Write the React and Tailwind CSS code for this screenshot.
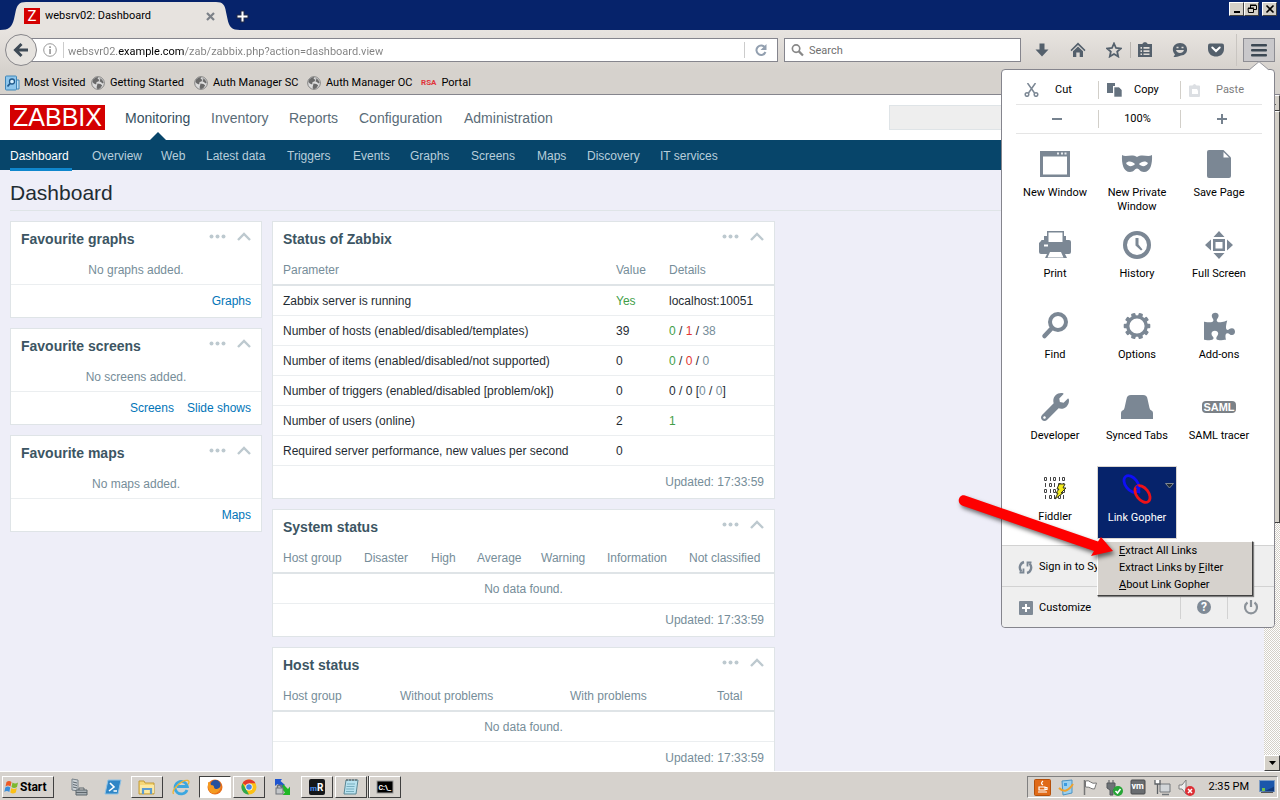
import React from 'react';
import { FaPuzzlePiece, FaWrench } from 'react-icons/fa';

const mainNav = [
    { label: 'Monitoring', width: 'w-[66px]', active: true },
    { label: 'Inventory', width: 'w-[58px]' },
    { label: 'Reports', width: 'w-[50px]' },
    { label: 'Configuration', width: 'w-[85px]' },
    { label: 'Administration', width: 'w-[90px]' },
];

const subNav = [
    { label: 'Dashboard', width: 'w-[62px]', active: true },
    { label: 'Overview', width: 'w-[49px]' },
    { label: 'Web', width: 'w-[25px]' },
    { label: 'Latest data', width: 'w-[61px]' },
    { label: 'Triggers', width: 'w-[46px]' },
    { label: 'Events', width: 'w-[37px]' },
    { label: 'Graphs', width: 'w-[41px]' },
    { label: 'Screens', width: 'w-[46px]' },
    { label: 'Maps', width: 'w-[30px]' },
    { label: 'Discovery', width: 'w-[53px]' },
    { label: 'IT services', width: 'w-[60px]' },
];

const green = 'text-[#429e47]';
const red = 'text-[#e33734]';
const grey = 'text-[#768d99]';

const statusRows = [
    { name: 'Zabbix server is running', value: <span className={green}>Yes</span>, details: 'localhost:10051' },
    {
        name: 'Number of hosts (enabled/disabled/templates)',
        value: '39',
        details: <><span className={green}>0</span> / <span className={red}>1</span> / <span className={grey}>38</span></>,
    },
    {
        name: 'Number of items (enabled/disabled/not supported)',
        value: '0',
        details: <><span className={green}>0</span> / <span className={red}>0</span> / <span className={grey}>0</span></>,
    },
    {
        name: 'Number of triggers (enabled/disabled [problem/ok])',
        value: '0',
        details: <>0 / 0 [<span className={grey}>0</span> / <span className={grey}>0</span>]</>,
    },
    { name: 'Number of users (online)', value: '2', details: <span className={green}>1</span> },
    { name: 'Required server performance, new values per second', value: '0', details: '' },
];

function ZabbixFavicon() {
    return (
        <span className="flex h-4 w-4 items-center justify-center bg-[#d40000] text-[15px] leading-4 text-white">Z</span>
    );
}

function GlobeIcon() {
    return (
        <svg width="14" height="14" viewBox="0 0 15 15">
            <circle cx="7.5" cy="7.5" r="6.8" fill="#dcdcdc" stroke="#7e7e7e" />
            <path d="M2 4 5 1.500 8 1l-1 2 2 1-1 2-2 .5L5.500 9 3 8 1.500 6.500zM9 2l3 2 1.500 3-1 1-2-1.500L9 5.500 10 4zM7 8l3 .5 2 1.500-2 3-3 1.200L6 12z" fill="#6a6a6a" />
        </svg>
    );
}

function TitleBar() {
    const bevel = 'flex h-[14px] items-center justify-center border border-t-white border-l-white border-r-[#404040] border-b-[#404040] bg-[#d4d0c8]';
    return (
        <div className="relative flex h-[30px] shrink-0 items-start bg-[#06236b]">
            <div className="relative mt-[2px] h-7 w-[242px] shrink-0">
                <svg className="absolute inset-0" width="242" height="28" viewBox="0 0 242 28">
                    <path d="M0 28C9 28 12 25 14 17L15.500 10C17 3 19 0 26 0H216C223 0 225 3 226 10L227.500 17C229 25 232 28 240 28Z" fill="#e7e3df" />
                </svg>
                <div className="relative flex h-7 items-center pl-6 pr-[26px]">
                    <ZabbixFavicon />
                    <span className="ml-[5px] flex-1 pt-px text-[11px] text-black">websrv02: Dashboard</span>
                    <button aria-label="Close tab" className="flex h-3 w-3 items-center justify-center">
                        <svg width="9" height="9" viewBox="0 0 9 9"><path d="M1 1l7 7M8 1L1 8" stroke="#7c8188" strokeWidth="2.200" /></svg>
                    </button>
                </div>
            </div>
            <button aria-label="New tab" className="mt-[10px] -ml-[6px]">
                <svg width="13" height="13" viewBox="0 0 13 13">
                    <path d="M4.500 .5h4v4h4v4h-4v4h-4v-4h-4v-4h4z" fill="#222b44" />
                    <path d="M5.500 1.500h2v4h4v2h-4v4h-2v-4h-4v-2h4z" fill="#fff" />
                </svg>
            </button>
            <div className="mt-[2px] mr-[3px] ml-auto flex">
                <button aria-label="Minimize" className={`w-[15px] ${bevel}`}>
                    <svg width="10" height="10" viewBox="0 0 10 10"><path d="M2 7h6v2H2z" /></svg>
                </button>
                <button aria-label="Restore" className={`w-[15px] ${bevel}`}>
                    <svg width="10" height="10" viewBox="0 0 10 10" fill="none" stroke="#000"><path d="M3 1h6M3.500 1v3M3 1.500h6.500v4H7M1 4.500h5.500v4h-5zM1 4h6" /></svg>
                </button>
                <button aria-label="Close" className={`ml-[3px] w-[15px] ${bevel}`}>
                    <svg width="10" height="10" viewBox="0 0 10 10"><path d="M1.500 1.500l7 7M8.500 1.500l-7 7" stroke="#000" strokeWidth="1.600" /></svg>
                </button>
            </div>
        </div>
    );
}

function ToolbarButton({ label, className, children }) {
    return (
        <button aria-label={label} className={`flex h-6 w-5 shrink-0 items-center justify-center ${className}`}>
            <svg width="16" height="16" viewBox="0 0 16 16" fill="#54606c">{children}</svg>
        </button>
    );
}

function Toolbar() {
    return (
        <div className="relative flex h-[40px] shrink-0 items-center bg-linear-to-b from-[#e8e4e0] to-[#d6d2cd] pl-[5px]">
            <button aria-label="Back" className="z-10 flex h-8 w-8 shrink-0 items-center justify-center rounded-full border border-[#87868a] bg-[#e6e3df]">
                <svg width="16" height="16" viewBox="0 0 16 16" fill="none" stroke="#3e4a56" strokeWidth="3"><path d="M15 8H3M8.500 2 2.500 8l6 6" /></svg>
            </button>
            <div className="-ml-4 flex h-6 flex-1 items-center border border-[#85858d] bg-white pl-[21px]">
                <svg width="14" height="14" viewBox="0 0 14 14" className="shrink-0">
                    <circle cx="7" cy="7" r="6.300" fill="none" stroke="#999" />
                    <path d="M6.200 6h1.700v5H6.200zM6.200 3.200h1.700v1.700H6.200z" fill="#999" />
                </svg>
                <span className="ml-[6px] h-4 w-px bg-[#ccc]" />
                <input
                    aria-label="Address"
                    readOnly
                    value="websvr02.example.com/zab/zabbix.php?action=dashboard.view"
                    className="h-5 flex-1 bg-[linear-gradient(to_right,#808080_54px,#000_54px,#000_120px,#808080_120px)] bg-clip-text pt-[2px] pl-1 text-[11px] text-transparent outline-none"
                />
                <button aria-label="Reload" className="flex h-4 w-[33px] items-center justify-center border-l border-[#ccc]">
                    <svg width="14" height="14" viewBox="0 0 14 14"><path d="M11 4.500A4.700 4.700 0 1 0 11.500 9" fill="none" stroke="#93a0b0" strokeWidth="2" /><path d="M12.500 1v6h-6z" fill="#93a0b0" /></svg>
                </button>
            </div>
            <label className="ml-[6px] flex h-6 w-[237px] items-center border border-[#85858d] bg-white pl-[6px]">
                <svg width="14" height="14" viewBox="0 0 14 14" fill="none" stroke="#888"><circle cx="5.500" cy="5.500" r="4" strokeWidth="1.800" /><path d="M8.500 8.500l4.500 4.500" strokeWidth="2.400" /></svg>
                <input aria-label="Search" placeholder="Search" className="ml-[5px] w-full pt-[2px] text-[11px] outline-none placeholder:text-[#707070]" />
            </label>
            <ToolbarButton label="Downloads" className="ml-[11px]"><path d="M5.500 1.500h5v6H14.500L8 14.500 1.500 7.500h4z" /></ToolbarButton>
            <ToolbarButton label="Home" className="ml-4">
                <path d="M8 .5 15.500 8l-1 1.200L8 3 1.500 9.200.5 8zM8 4.500l5 4.700V15H9.700v-4.500H6.300V15H3V9.200z" />
            </ToolbarButton>
            <ToolbarButton label="Bookmark this page" className="ml-4">
                <path d="M8 1.500l2 4.500 4.800.5-3.600 3.200 1 4.800L8 12l-4.200 2.500 1-4.800L1.200 6.500 6 6z" fill="none" stroke="#54606c" strokeWidth="1.800" />
            </ToolbarButton>
            <span className="ml-[6px] h-4 w-px bg-[#b9b5b0]" />
            <ToolbarButton label="Bookmarks" className="ml-1">
                <path d="M5.500 2c0-2.500 5-2.500 5 0H15v13H1V2zM3.500 5v1.700H5V5zm3 0v1.700h6V5zM3.500 8.200v1.700H5V8.200zm3 0v1.700h6V8.200zM3.500 11.400v1.700H5v-1.700zm3 0v1.700h6v-1.700z" fillRule="evenodd" />
            </ToolbarButton>
            <ToolbarButton label="Hello" className="ml-[15px]">
                <path d="M8 1c9 0 9.500 12 1 12.500C6 15 4 15 1.500 15L3 12.500C-1.500 8 1.500 1 8 1z" />
                <path d="M4.500 5.500h2M9.500 5.500h2" stroke="#e0dcd8" strokeWidth="1.500" />
                <path d="M4 8h8c-1 4-7 4-8 0z" fill="#e0dcd8" />
            </ToolbarButton>
            <ToolbarButton label="Pocket" className="ml-4">
                <path d="M2 1.500h12Q16 1.500 16 3.500V7c0 10-16 10-16 0V3.500Q0 1.500 2 1.500z" />
                <path d="M4.300 5.500 8 9l3.700-3.500" fill="none" stroke="#fff" strokeWidth="2" strokeLinecap="round" />
            </ToolbarButton>
            <span className="ml-[10px] h-8 w-px bg-[#c9c5c1]" />
            <button aria-label="Open menu" className="mr-[5px] ml-[6px] flex h-6 w-8 shrink-0 items-center justify-center border border-[#8d8d93] bg-[#c9c8cb]">
                <svg width="16" height="14" viewBox="0 0 16 14" fill="#3c4854"><rect y="1" width="16" height="2.400" rx="1" /><rect y="6" width="16" height="2.400" rx="1" /><rect y="11" width="16" height="2.400" rx="1" /></svg>
            </button>
        </div>
    );
}

function BookmarksBar() {
    return (
        <div className="flex h-[25px] shrink-0 items-center border-b border-[#85858d] bg-[#d6d2cd] pt-[2px] pl-[5px] text-[11px] text-black">
            <a href="#most" className="flex w-[86px] items-center gap-1">
                <svg width="15" height="16" viewBox="0 0 15 16"><rect x=".5" y="1" width="11" height="14" rx="1" fill="#8ec6ec" stroke="#3f86b8" /><path d="M12 5h2v9h-2" fill="#bfe0f5" stroke="#3f86b8" /><circle cx="7" cy="6.500" r="2.500" fill="#d8effc" stroke="#205a8c" strokeWidth="1.300" /><path d="M5 8.500 2.500 11.500" stroke="#205a8c" strokeWidth="1.800" /></svg>
                Most Visited
            </a>
            <a href="#start" className="flex w-[103px] items-center gap-[5px]"><GlobeIcon />Getting Started</a>
            <a href="#sc" className="flex w-[113px] items-center gap-[5px]"><GlobeIcon />Auth Manager SC</a>
            <a href="#oc" className="flex w-[114px] items-center gap-[5px]"><GlobeIcon />Auth Manager OC</a>
            <a href="#portal" className="flex items-center gap-[5px]">
                <span className="text-[8px] font-bold text-[#e0343a]">RSA</span>Portal
            </a>
        </div>
    );
}

function Widget({ title, children, footer }) {
    return (
        <section className="border border-[#dfe4e7] bg-white">
            <div className="flex h-[33px] items-center pt-[2px] pr-[10px] pl-[10px]">
                <h2 className="flex-1 text-[14px] font-bold text-[#3c5563]">{title}</h2>
                <button aria-label="More" className="mb-[6px]">
                    <svg width="17" height="5" viewBox="0 0 17 5" fill="#bdc9cf"><circle cx="2.500" cy="2.500" r="2" /><circle cx="8.500" cy="2.500" r="2" /><circle cx="14.500" cy="2.500" r="2" /></svg>
                </button>
                <button aria-label="Collapse" className="mb-[6px] ml-[11px]">
                    <svg width="14" height="9" viewBox="0 0 14 9"><path d="M1 8l6-6 6 6" fill="none" stroke="#bdc9cf" strokeWidth="2.400" /></svg>
                </button>
            </div>
            {children}
            <div className="flex h-8 items-center justify-end gap-[13px] px-[10px]">{footer}</div>
        </section>
    );
}

function EmptyRow({ children }) {
    return <p className="flex h-[30px] items-center justify-center border-b border-[#ebeef0] text-[#768d99]">{children}</p>;
}

function Updated() {
    return <span className="text-[#768d99]">Updated: 17:33:59</span>;
}

function Dashboard() {
    const link = 'text-[#0275b8]';
    const th = 'h-[31px] border-b-2 border-[#dfe4e7] font-normal';
    return (
        <main className="flex items-start gap-[10px] px-[10px] pt-[10px] text-[12px] text-[#1f2c33]">
            <div className="flex w-[252px] shrink-0 flex-col gap-[10px]">
                <Widget title="Favourite graphs" footer={<a href="#graphs" className={link}>Graphs</a>}>
                    <EmptyRow>No graphs added.</EmptyRow>
                </Widget>
                <Widget
                    title="Favourite screens"
                    footer={<><a href="#screens" className={link}>Screens</a><a href="#slides" className={link}>Slide shows</a></>}
                >
                    <EmptyRow>No screens added.</EmptyRow>
                </Widget>
                <Widget title="Favourite maps" footer={<a href="#maps" className={link}>Maps</a>}>
                    <EmptyRow>No maps added.</EmptyRow>
                </Widget>
            </div>
            <div className="flex w-[503px] shrink-0 flex-col gap-[10px]">
                <Widget title="Status of Zabbix" footer={<Updated />}>
                    <table className="w-full table-fixed border-separate border-spacing-0 text-left">
                        <thead className="text-[#768d99]">
                            <tr>
                                <th className={`pl-[10px] ${th}`}>Parameter</th>
                                <th className={`w-[53px] ${th}`}>Value</th>
                                <th className={`w-[105px] ${th}`}>Details</th>
                            </tr>
                        </thead>
                        <tbody>
                            {statusRows.map((row) => (
                                <tr key={row.name}>
                                    <td className="h-[30px] border-b border-[#ebeef0] pl-[10px]">{row.name}</td>
                                    <td className="border-b border-[#ebeef0]">{row.value}</td>
                                    <td className="border-b border-[#ebeef0]">{row.details}</td>
                                </tr>
                            ))}
                        </tbody>
                    </table>
                </Widget>
                <Widget title="System status" footer={<Updated />}>
                    <table className="w-full table-fixed border-separate border-spacing-0 text-left text-[#768d99]">
                        <thead>
                            <tr>
                                <th className={`w-[91px] pl-[10px] ${th}`}>Host group</th>
                                <th className={`w-[67px] ${th}`}>Disaster</th>
                                <th className={`w-[46px] ${th}`}>High</th>
                                <th className={`w-[64px] ${th}`}>Average</th>
                                <th className={`w-[66px] ${th}`}>Warning</th>
                                <th className={`w-[82px] ${th}`}>Information</th>
                                <th className={th}>Not classified</th>
                            </tr>
                        </thead>
                        <tbody>
                            <tr><td colSpan="7" className="h-[30px] border-b border-[#ebeef0] text-center">No data found.</td></tr>
                        </tbody>
                    </table>
                </Widget>
                <Widget title="Host status" footer={<Updated />}>
                    <table className="w-full table-fixed border-separate border-spacing-0 text-left text-[#768d99]">
                        <thead>
                            <tr>
                                <th className={`w-[127px] pl-[10px] ${th}`}>Host group</th>
                                <th className={`w-[170px] ${th}`}>Without problems</th>
                                <th className={`w-[147px] ${th}`}>With problems</th>
                                <th className={th}>Total</th>
                            </tr>
                        </thead>
                        <tbody>
                            <tr><td colSpan="4" className="h-[30px] border-b border-[#ebeef0] text-center">No data found.</td></tr>
                        </tbody>
                    </table>
                </Widget>
            </div>
        </main>
    );
}

function ZabbixPage() {
    return (
        <div className="h-full flex-1 overflow-hidden bg-[#eeeef8] font-['Liberation_Sans',Arial,sans-serif]">
            <header className="flex h-[45px] items-center bg-white pl-[10px]">
                <a href="#home" className="flex h-[25px] w-[95px] items-center justify-center bg-[#d40000] text-[25px] leading-[25px] text-white">ZABBIX</a>
                <nav className="ml-5 flex h-full gap-5 text-[14px] text-[#5a6c78]">
                    {mainNav.map((item) => (
                        <a key={item.label} href="#nav" className={`relative flex items-center whitespace-nowrap pt-px ${item.width} ${item.active ? 'text-[#36505f]' : ''}`}>
                            {item.label}
                            {item.active && (
                                <span className="absolute bottom-0 left-[25px] border-x-8 border-b-8 border-x-transparent border-b-[#07456a]" />
                            )}
                        </a>
                    ))}
                </nav>
                <input aria-label="Search hosts" className="mr-[175px] ml-auto h-[25px] w-[200px] border border-[#dfe4e7] bg-[#eeeeee] px-1 text-[12px]" />
            </header>
            <nav className="flex h-[30px] gap-5 bg-[#07456a] pl-[10px] text-[12px] text-[#b8cedb]">
                {subNav.map((item) => (
                    <a key={item.label} href="#sub" className={`relative flex items-center whitespace-nowrap pt-px ${item.width} ${item.active ? 'text-white' : ''}`}>
                        {item.label}
                        {item.active && <span className="absolute inset-x-0 -bottom-px h-[3px] bg-[#0f87cd]" />}
                    </a>
                ))}
            </nav>
            <h1 className="mx-[10px] flex h-[41px] items-center border-b border-[#dfe4e7] pt-[5px] text-[21px] text-[#1f2c33]">Dashboard</h1>
            <Dashboard />
        </div>
    );
}

function Scrollbar() {
    const button = 'flex h-4 w-full items-center justify-center border border-t-white border-l-white border-r-[#404040] border-b-[#404040] bg-[#d4d0c8]';
    return (
        <div className="flex h-full w-4 shrink-0 flex-col bg-[repeating-conic-gradient(#d4d0c8_0%_25%,#fff_0%_50%)] bg-[length:2px_2px]">
            <button aria-label="Scroll up" className={button}><svg width="7" height="4" viewBox="0 0 7 4"><path d="M0 4l3.500-4L7 4z" /></svg></button>
            <div className="h-[412px] border border-t-white border-l-white border-r-[#404040] border-b-[#404040] bg-[#d4d0c8]" />
            <button aria-label="Scroll down" className={`mt-auto ${button}`}><svg width="7" height="4" viewBox="0 0 7 4"><path d="M0 0l3.500 4L7 0z" /></svg></button>
        </div>
    );
}

function PanelIcon({ children }) {
    return <svg width="32" height="32" viewBox="0 0 32 32" fill="#7b8794">{children}</svg>;
}

const teeth = [0, 36, 72, 108, 144, 180, 216, 252, 288, 324];

const panelItems = [
    {
        label: 'New Window',
        icon: (
            <PanelIcon>
                <path d="M1 3h30v26H1zM4 8.500v18h24v-18z" fillRule="evenodd" />
                <path d="M18 4.500h2v2h-2zM22 4.500h2v2h-2zM25.500 4.500h2v2h-2z" fill="#e8ebee" />
            </PanelIcon>
        ),
    },
    {
        label: 'New Private Window',
        icon: (
            <PanelIcon>
                <path d="M1 7c4 2.500 10-1.500 15 2 5-3.500 11 .5 15-2 .5 9-1.500 17-8 17-4 0-5-3.500-7-3.500S13 24 9 24C2.500 24 .5 16 1 7zM5 15c2 4 6.500 4 9 1-2.500-3-7-3.500-9-1zM27 15c-2-2.500-6.500-2-9 1 2.500 3 7 3 9-1z" fillRule="evenodd" />
            </PanelIcon>
        ),
    },
    { label: 'Save Page', icon: <PanelIcon><path d="M6 2h14.500L28 9.500V28q0 2-2 2H6q-2 0-2-2V4q0-2 2-2z" /><path d="M20.500 4 26 9.500h-5.500z" fill="#fff" /></PanelIcon> },
    {
        label: 'Print',
        icon: (
            <PanelIcon>
                <path d="M2 12q0-1 1-1h2V7h3V2h17v5h2v4h3q2 0 2 2v10q0 2-2 2h-4l2 4H6l2-4H2q-2 0-2-2V14zM9.500 3.500V13h14V3.500z" fillRule="evenodd" />
                <path d="M11 23h11l2.500 5.500h-16zM5 15.500h4v2H5z" fill="#fff" />
            </PanelIcon>
        ),
    },
    {
        label: 'History',
        icon: <PanelIcon><circle cx="16" cy="16" r="12" fill="#fff" stroke="#7b8794" strokeWidth="4" /><path d="M14.500 9h3v6.500l4 5-1.500 1-5.500-5z" /></PanelIcon>,
    },
    {
        label: 'Full Screen',
        icon: (
            <PanelIcon>
                <path d="M16 2l5.500 6h-11zM16 30l5.500-6h-11zM2 16l6-5.500v11zM30 16l-6-5.500v11z" />
                <path d="M10 10h12v12H10zM12.500 13v6.500h7V13z" fillRule="evenodd" />
            </PanelIcon>
        ),
    },
    {
        label: 'Find',
        icon: <PanelIcon><circle cx="19" cy="12" r="8" fill="none" stroke="#7b8794" strokeWidth="4" /><path d="M13 18 5.500 26" stroke="#7b8794" strokeWidth="4.500" strokeLinecap="round" /></PanelIcon>,
    },
    {
        label: 'Options',
        icon: (
            <PanelIcon>
                <circle cx="16" cy="16" r="9.200" fill="none" stroke="#7b8794" strokeWidth="3.200" />
                {teeth.map((angle) => <rect key={angle} x="13.800" y="2.700" width="4.400" height="4" rx="1" transform={`rotate(${angle + 18} 16 16)`} />)}
            </PanelIcon>
        ),
    },
    { label: 'Add-ons', icon: <FaPuzzlePiece size={31} color="#7b8794" /> },
    { label: 'Developer', icon: <FaWrench size={28} color="#7b8794" /> },
    {
        label: 'Synced Tabs',
        icon: <PanelIcon><path d="M10 4h12q4 0 4.500 4l2 9q.5 2 2 2.500Q32 20 32 22v6H0v-6q0-2 1.500-2.500 1.500-.5 2-2.500l2-9Q6 4 10 4z" /></PanelIcon>,
    },
    {
        label: 'SAML tracer',
        icon: <span className="rounded-[4px] bg-[#7b8187] px-px font-['Liberation_Sans',sans-serif] text-[11px] leading-3 font-bold text-white">SAML</span>,
    },
    {
        label: 'Fiddler',
        icon: (
            <svg width="24" height="24" viewBox="0 0 24 24">
                <g fill="none" stroke="#444">
                    {[1, 13].map((y) => (
                        <path key={y} d={`M1.500 ${y + .5}h2v3h-2zM7.500 ${y}v4M10.500 ${y + .5}h2v3h-2zM16.500 ${y}v4M19.500 ${y + .5}h2v3h-2z`} />
                    ))}
                    {[7, 19].map((y) => (
                        <path key={y} d={`M2.500 ${y}v4M6.500 ${y + .5}h2v3h-2zM11.500 ${y}v4M15.500 ${y + .5}h2v3h-2zM20.500 ${y}v4`} />
                    ))}
                </g>
                <path d="M16 8h6l-2 4h3l-5 5h2l-8 6 3-6h-2l3-4h-2z" fill="#f2ea1c" stroke="#33331a" />
            </svg>
        ),
    },
];

function FirefoxMenu() {
    const cell = 'flex h-[73px] flex-col items-center pt-[6px] text-center leading-[14px]';
    return (
        <div className="absolute top-[69px] right-[5px] z-20 w-[274px] rounded-[4px] border border-[#85858d] bg-white text-[11px] text-black">
            <svg className="absolute -top-[9px] right-[5px]" width="20" height="10" viewBox="0 0 20 10">
                <path d="M0 9.500 10 .7l10 8.800V10H0z" fill="#fff" />
                <path d="M0 9 10 .7 20 9" fill="none" stroke="#9a9aa0" />
            </svg>
            <div className="mr-3 ml-[14px]">
                <div className="grid h-[35px] grid-cols-3 items-center border-b border-[#e5e5e5] pt-[5px]">
                    <button className="flex h-[18px] items-center gap-4 pt-px pl-2">
                        <svg width="15" height="14" viewBox="0 0 15 14" fill="none" stroke="#7b8794" strokeWidth="1.500"><path d="M3.500 0 10.500 10M11.500 0 4.500 10" /><circle cx="3" cy="11.500" r="1.800" /><circle cx="12" cy="11.500" r="1.800" /></svg>
                        Cut
                    </button>
                    <button className="flex h-[18px] items-center gap-3 border-l border-[#d2cfc9] pt-px pl-2">
                        <svg width="15" height="14" viewBox="0 0 15 14" fill="#65727f"><path d="M0 0h8v3H6v7H0z" /><path d="M7 4h5l3 3v7H7z" stroke="#fff" strokeWidth=".6" /></svg>
                        Copy
                    </button>
                    <button disabled className="flex h-[18px] items-center gap-4 border-l border-[#d2cfc9] pt-px pl-2 text-[#7d7d7d]">
                        <svg width="11" height="13" viewBox="0 0 11 13"><path d="M1 1.500h2.500q2-3 4 0H10q1 0 1 1V12q0 1-1 1H1q-1 0-1-1V2.500q0-1 1-1z" fill="#dcdfe3" /><path d="M3 5h5l1 2v3H3z" fill="#fff" /></svg>
                        Paste
                    </button>
                </div>
                <div className="grid h-[29px] grid-cols-3 items-center border-b border-[#e5e5e5]">
                    <button aria-label="Zoom out" className="flex h-[18px] items-center justify-center"><svg width="10" height="10" viewBox="0 0 10 10"><path d="M0 5h10" stroke="#76828f" strokeWidth="2" /></svg></button>
                    <button className="h-[18px] border-l border-[#d2cfc9] pt-px pr-1">100%</button>
                    <button aria-label="Zoom in" className="flex h-[18px] items-center justify-center border-l border-[#d2cfc9]"><svg width="10" height="10" viewBox="0 0 10 10"><path d="M0 5h10M5 0v10" stroke="#76828f" strokeWidth="2" /></svg></button>
                </div>
            </div>
            <div className="mr-[14px] ml-[12px] grid grid-cols-3 gap-y-2 pt-2 pb-[6px]">
                {panelItems.map((item) => (
                    <button key={item.label} className={cell}>
                        <span className="mb-[6px] flex h-8 items-center">{item.icon}</span>
                        <span className="w-[72px]">{item.label}</span>
                    </button>
                ))}
                <button className={`relative mx-px border border-[#d9d5d0] bg-[#06236b] text-white ${cell}`}>
                    <span className="mb-[6px] flex h-8 items-center">
                        <svg width="32" height="32" viewBox="0 0 32 32" fill="none" strokeWidth="2.800">
                            <ellipse cx="10.500" cy="11" rx="6" ry="9.500" transform="rotate(-38 10.500 11)" stroke="#0f0ff5" />
                            <ellipse cx="21.500" cy="21" rx="6" ry="9.500" transform="rotate(-38 21.500 21)" stroke="#ee1218" />
                            <path d="M15.500 13q3.500 4 2 7" stroke="#0f0ff5" />
                        </svg>
                    </span>
                    <span>Link Gopher</span>
                    <svg className="absolute top-4 right-[2px]" width="9" height="6" viewBox="0 0 9 6"><path d="M.5 .5h8L4.500 5z" fill="#222b33" stroke="#7f8790" /></svg>
                </button>
            </div>
            <div className="rounded-b-[4px] bg-[#efefef]">
                <button className="flex h-[41px] w-full items-center gap-[6px] border-t border-[#d2d2d2] pt-[2px] pl-4">
                    <svg width="15" height="15" viewBox="0 0 15 15" fill="none" stroke="#7b8794" strokeWidth="2.400"><path d="M6 2A5.700 5.700 0 0 0 3.500 11.500M9 13a5.700 5.700 0 0 0 2.500-9.500" /><path d="M1.500 12.500h4v-4M13.500 2.500h-4v4" strokeWidth="1.800" /></svg>
                    Sign in to Sync
                </button>
                <div className="flex h-[41px] items-center border-t border-[#d2d2d2]">
                    <button className="flex h-full flex-1 items-center gap-[6px] pt-[2px] pl-[17px]">
                        <svg width="14" height="14" viewBox="0 0 14 14"><rect width="14" height="14" rx="1" fill="#7f8a96" /><path d="M3 7h8M7 3v8" stroke="#fff" strokeWidth="2" /></svg>
                        Customize
                    </button>
                    <button aria-label="Help" className="flex h-6 w-[47px] items-center justify-center border-l border-[#d2d2d2]">
                        <span className="flex h-[14px] w-[14px] items-center justify-center rounded-full bg-[#7f8a96] text-[12px] font-bold text-white">?</span>
                    </button>
                    <button aria-label="Quit" className="flex h-6 w-[47px] items-center justify-center border-l border-[#d2d2d2]">
                        <svg width="16" height="16" viewBox="0 0 16 16" fill="none" stroke="#8b9299" strokeWidth="2.200"><path d="M4.500 3.500a6 6 0 1 0 7 0M8 1v7" /></svg>
                    </button>
                </div>
            </div>
            <div className="absolute top-[471px] right-[21px] flex w-[156px] flex-col border border-t-white border-l-white border-r-[#404040] border-b-[#404040] bg-[#d6d2cd] py-px text-left shadow-[1px_1px_1px_#808080]">
                <button className="h-[17px] pl-[21px] text-left"><u>E</u>xtract All Links</button>
                <button className="h-[17px] pl-[21px] text-left">Extract Links by <u>F</u>ilter</button>
                <button className="h-[17px] pl-[21px] text-left"><u>A</u>bout Link Gopher</button>
            </div>
            <svg className="pointer-events-none absolute top-[418px] right-[156px] drop-shadow-[2px_3px_2px_rgba(0,0,0,0.55)]" width="164" height="76" viewBox="0 0 164 76">
                <path d="M11 7.500 144 53.500 147 49l12 14-22 5 3-5L8 17.500C2 15 5 5.500 11 7.500z" fill="#fe0000" />
            </svg>
        </div>
    );
}

function TaskButton({ label, pressed, children }) {
    return (
        <button
            aria-label={label}
            className={`flex h-[22px] w-8 items-center justify-center border ${pressed
                ? 'border-t-[#404040] border-l-[#404040] border-r-white border-b-white bg-white'
                : 'border-t-white border-l-white border-r-[#404040] border-b-[#404040]'}`}
        >
            <svg width="18" height="18" viewBox="0 0 18 18">{children}</svg>
        </button>
    );
}

function TaskIcon({ label, children }) {
    return <button aria-label={label} className="flex w-8 justify-center"><svg width="18" height="18" viewBox="0 0 18 18">{children}</svg></button>;
}

function TrayIcon({ label, children }) {
    return <button aria-label={label} className="w-6 pl-1"><svg width="17" height="17" viewBox="0 0 17 17">{children}</svg></button>;
}

function Taskbar() {
    return (
        <footer className="flex h-[29px] shrink-0 items-center border-t border-white bg-[#d6d2cd] pt-[2px] pl-[2px] text-[11px] text-black">
            <button className="flex h-[22px] w-[52px] items-center gap-px border border-t-white border-l-white border-r-[#404040] border-b-[#404040] pl-px text-[12px] font-bold">
                <svg width="15" height="14" viewBox="0 0 15 14">
                    <path d="M2.500 2q2.500-2 5 0L6.500 6.500q-2.500-2-5 0z" fill="#ee5a24" />
                    <path d="M8.500 2.500q2.500 2 5.500 0L13 7q-3 2-5.500 0z" fill="#7cb82f" />
                    <path d="M1.300 7.500q2.500-2 5 0L5.300 12q-2.500-2-5 0z" fill="#3a8edb" />
                    <path d="M7.300 8q2.500 2 5.500 0l-1 4.500q-3 2-5.500 0z" fill="#fbc015" />
                </svg>
                Start
            </button>
            <div className="ml-[9px] flex items-center gap-[2px]">
                <TaskIcon label="Server Manager">
                    <path d="M2 1l6 1v11l-6-1z" fill="#ccd2d6" stroke="#79838b" /><path d="M3 4l4 1M3 6.500l4 1M3 9l4 1" stroke="#5c666e" />
                    <path d="M6 12h11v5H6z" fill="#a8b0b5" stroke="#5d666c" /><path d="M9 12v-2h5v2M6 14.500h11" fill="none" stroke="#5d666c" />
                </TaskIcon>
                <TaskIcon label="PowerShell">
                    <path d="M4 2h13l-3 14H1z" fill="#2f86c6" stroke="#8fc2e6" /><path d="M6 5l4 4-5 4M9.500 13H13" fill="none" stroke="#fff" strokeWidth="1.600" />
                </TaskIcon>
                <TaskButton label="Explorer">
                    <path d="M1 3h5l1 2h9v11H1z" fill="#f5d777" stroke="#c39b36" /><path d="M2 7h14v8H2z" fill="#fbe9a3" /><path d="M5 16v-5h8v5" fill="none" stroke="#5b9bd1" strokeWidth="2.200" />
                </TaskButton>
                <TaskIcon label="Internet Explorer">
                    <path d="M15 12a6.200 6.200 0 1 1 .3-3.500H5" fill="none" stroke="#3ba7e0" strokeWidth="2.800" /><path d="M1.500 16C-1 12 10 1 16 2.500q2 1 0 4" fill="none" stroke="#f0b432" strokeWidth="1.300" />
                </TaskIcon>
                <TaskButton label="Firefox" pressed>
                    <circle cx="9" cy="9" r="7.500" fill="#e8701b" /><circle cx="9.500" cy="7" r="5" fill="#25519e" /><path d="M2 4q2 0 3 3 3 0 3 2 0 2 3 2 2 0 4-3-1 7-7 7.500Q1 15 2 4z" fill="#f49a20" />
                </TaskButton>
                <TaskButton label="Chrome">
                    <circle cx="9" cy="9" r="7.500" fill="#fbc116" /><path d="M9 9 2.500 5.250A7.500 7.500 0 0 1 15.500 5.250H9z" fill="#e33b2e" /><path d="M2.500 5.250 9 16.500A7.500 7.500 0 0 1 2.500 5.250z" fill="#2da94f" /><circle cx="9" cy="9" r="3.600" fill="#fff" /><circle cx="9" cy="9" r="2.800" fill="#4285e8" />
                </TaskButton>
                <TaskIcon label="Secure transfer">
                    <path d="M1 1h7L6.500 3 11 7 8 10 3.500 6 1 8z" fill="#1f55cf" /><path d="M9 6l5 5 2-2.500V17H8.500l2.500-2.500L8 11z" fill="#20b726" /><rect x="2" y="10" width="7" height="6" fill="#c3c6c9" stroke="#6e7378" /><path d="M3.500 10V7.500h4V10" fill="none" stroke="#6e7378" strokeWidth="1.400" />
                </TaskIcon>
                <TaskButton label="mRemote">
                    <rect x="1" y="1" width="16" height="16" rx="2" fill="#15171a" /><text x="2" y="13" fontSize="8" fontWeight="bold" fill="#4a8df0">m</text><text x="9" y="13" fontSize="10" fontWeight="bold" fill="#fff">R</text>
                </TaskButton>
                <div className="-mr-[2px] border-r border-[#404040] pr-px">
                    <TaskButton label="Notepad">
                        <path d="M4 2h12l-2 14H2z" fill="#b8e2ef" stroke="#5b8795" /><path d="M5 6h8M4.500 8.500h8M4.200 11h8M4 13.500h8" stroke="#77aebf" /><path d="M5 1v2M8 1v2M11 1v2M14 1v2" stroke="#555" />
                    </TaskButton>
                </div>
                <TaskButton label="Command Prompt">
                    <rect x="1" y="3" width="16" height="12" fill="#000" stroke="#9a9a9a" /><text x="2.500" y="12" fontSize="7" fontWeight="bold" fill="#fff">C:\_</text>
                </TaskButton>
            </div>
            <div className="mr-[2px] ml-auto flex h-[22px] items-center border border-t-[#808080] border-l-[#808080] border-r-white border-b-white pl-[2px]">
                <TrayIcon label="Java"><rect x=".5" y=".5" width="16" height="16" rx="1" fill="#e06a17" stroke="#b5500a" /><path d="M9 2q-3 2.500 0 4M5 8h6v3H5zM11 8.500h2v2h-2M4 13h9" fill="none" stroke="#fff" strokeWidth="1.200" /></TrayIcon>
                <TrayIcon label="Windows Update"><path d="M4 2l10-1v13l-9 2z" fill="#9bd0ef" stroke="#4c94c4" /><path d="M1 9q7 7 14-4" fill="none" stroke="#f0a12c" strokeWidth="2" /><path d="M6 4h3v3H6z" fill="#3c9be0" /></TrayIcon>
                <TrayIcon label="Action Center"><path d="M2.500 1v15" stroke="#777" strokeWidth="1.500" /><path d="M3.500 2q3-1 5 1t6 1l-2 6q-3 0-4-1t-5-1z" fill="#fff" stroke="#777" /></TrayIcon>
                <TrayIcon label="Safely Remove Hardware"><path d="M3 1v3M7 1v3M1 4h8v5l-2 2v5H4v-5L1 9z" fill="#6d7276" stroke="#54585c" /><circle cx="12" cy="12" r="5" fill="#27a536" /><path d="M9.500 12l2 2 3-4" fill="none" stroke="#fff" strokeWidth="1.600" /></TrayIcon>
                <TrayIcon label="VMware Tools"><rect x="1" y="1" width="14" height="14" rx="1" fill="#6a6d70" stroke="#484a4c" /><text x="1.500" y="10" fontSize="9" fontWeight="bold" fill="#fff">vm</text></TrayIcon>
                <TrayIcon label="Network"><path d="M6 5h10v8H6z" fill="#d2d6d9" stroke="#72777b" /><path d="M8 15.500h7" stroke="#72777b" strokeWidth="1.500" /><path d="M1 1v4h5V1M3.500 5v10" fill="#fff" stroke="#5e6266" strokeWidth="1.300" /></TrayIcon>
                <TrayIcon label="Volume"><path d="M1 6h3l4-5v14l-4-5H1z" fill="#eee" stroke="#808080" /><circle cx="12" cy="12" r="5" fill="#dd2f35" /><path d="M10 10l4 4M14 10l-4 4" stroke="#fff" strokeWidth="1.500" /></TrayIcon>
                <span className="ml-[11px] pt-px">2:35 PM</span>
                <button aria-label="Show desktop" className="ml-[10px] w-[18px]">
                    <svg width="16" height="14" viewBox="0 0 16 14"><rect x=".5" y=".5" width="15" height="11" fill="#1b57ab" stroke="#7d9cc4" /><path d="M1 11.500q7 0 14-5v5z" fill="#123a7c" /><path d="M2 12.500h12" stroke="#555" /><rect x="3" y="8" width="3" height="3" fill="#6fc04c" /></svg>
                </button>
            </div>
        </footer>
    );
}

export default function App() {
    return (
        <div className="relative flex h-screen flex-col overflow-hidden font-[Roboto,Tahoma,sans-serif]">
            <TitleBar />
            <Toolbar />
            <BookmarksBar />
            <div className="flex min-h-0 flex-1">
                <ZabbixPage />
                <Scrollbar />
            </div>
            <Taskbar />
            <FirefoxMenu />
        </div>
    );
}
